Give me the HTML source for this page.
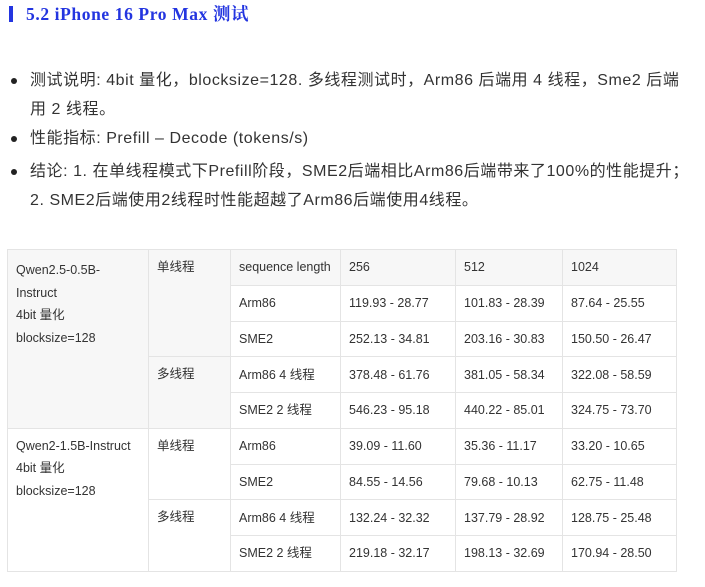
<!DOCTYPE html>
<html><head><meta charset="utf-8"><style>
body{margin:0;background:#fff;width:705px;height:587px;overflow:hidden;font-family:"Liberation Sans","Noto Sans CJK SC",sans-serif;color:#333;}
.h{position:absolute;left:9px;top:2px;height:22px;}
.bar{position:absolute;left:0;top:4px;width:4px;height:16px;background:#2335e0;}
.ht{position:absolute;left:17px;top:0;font-size:17.5px;line-height:24px;font-weight:bold;color:#2335e0;white-space:nowrap;font-family:"Liberation Serif","Noto Serif CJK SC",serif;letter-spacing:0.6px;}
.l{position:absolute;left:30px;font-size:16px;line-height:20px;white-space:nowrap;letter-spacing:0.55px;}
.d{position:absolute;left:11px;width:6px;height:6px;border-radius:50%;background:#222;}
table{position:absolute;left:7px;top:249px;border-collapse:collapse;font-size:12.5px;color:#333;table-layout:fixed;}
td{border:1px solid #e4e4e4;height:35.75px;padding:0 0 0 8px;vertical-align:middle;box-sizing:border-box;line-height:16px;overflow:hidden;white-space:nowrap;}
td.t{vertical-align:top;padding-top:9px;line-height:22.5px;white-space:normal;}
.g{background:#f7f7f7;}
</style></head><body>
<div class="h"><div class="bar"></div><div class="ht">5.2 iPhone 16 Pro Max 测试</div></div>
<div class="d" style="top:78px"></div>
<div class="l" style="top:71px">测试说明: 4bit 量化，blocksize=128. 多线程测试时，Arm86 后端用 4 线程，Sme2 后端</div>
<div class="l" style="top:100px">用 2 线程。</div>
<div class="d" style="top:136px"></div>
<div class="l" style="top:129px">性能指标: Prefill – Decode (tokens/s)</div>
<div class="d" style="top:169px"></div>
<div class="l" style="top:162px">结论: 1. 在单线程模式下Prefill阶段，SME2后端相比Arm86后端带来了100%的性能提升；</div>
<div class="l" style="top:191px">2. SME2后端使用2线程时性能超越了Arm86后端使用4线程。</div>
<table>
<colgroup><col style="width:141px"><col style="width:82px"><col style="width:110px"><col style="width:115px"><col style="width:107px"><col style="width:114px"></colgroup>
<tr><td rowspan="5" class="t g">Qwen2.5-0.5B-<br>Instruct<br>4bit 量化<br>blocksize=128</td><td rowspan="3" class="t g" style="padding-top:6px">单线程</td><td class="g">sequence length</td><td class="g">256</td><td class="g">512</td><td class="g">1024</td></tr>
<tr><td>Arm86</td><td>119.93 - 28.77</td><td>101.83 - 28.39</td><td>87.64 - 25.55</td></tr>
<tr><td>SME2</td><td>252.13 - 34.81</td><td>203.16 - 30.83</td><td>150.50 - 26.47</td></tr>
<tr><td rowspan="2" class="t g" style="padding-top:6px">多线程</td><td>Arm86 4 线程</td><td>378.48 - 61.76</td><td>381.05 - 58.34</td><td>322.08 - 58.59</td></tr>
<tr><td>SME2 2 线程</td><td>546.23 - 95.18</td><td>440.22 - 85.01</td><td>324.75 - 73.70</td></tr>
<tr><td rowspan="4" class="t" style="padding-top:6px">Qwen2-1.5B-Instruct<br>4bit 量化<br>blocksize=128</td><td rowspan="2" class="t" style="padding-top:6px">单线程</td><td>Arm86</td><td>39.09 - 11.60</td><td>35.36 - 11.17</td><td>33.20 - 10.65</td></tr>
<tr><td>SME2</td><td>84.55 - 14.56</td><td>79.68 - 10.13</td><td>62.75 - 11.48</td></tr>
<tr><td rowspan="2" class="t" style="padding-top:6px">多线程</td><td>Arm86 4 线程</td><td>132.24 - 32.32</td><td>137.79 - 28.92</td><td>128.75 - 25.48</td></tr>
<tr><td>SME2 2 线程</td><td>219.18 - 32.17</td><td>198.13 - 32.69</td><td>170.94 - 28.50</td></tr>
</table>
</body></html>
